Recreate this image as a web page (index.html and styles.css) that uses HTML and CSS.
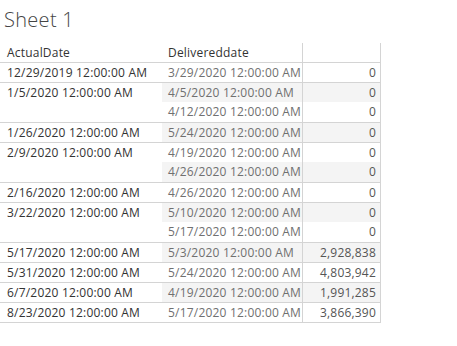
FILE: index.html
```html
<!DOCTYPE html>
<html>
<head>
<meta charset="utf-8">
<link rel="stylesheet" href="styles.css">
</head>
<body>
<div class="title">Sheet 1</div>
<div class="table">
  <div class="head">
    <div class="c1">ActualDate</div>
    <div class="c2">Delivereddate</div>
    <div class="c3"></div>
  </div>
  <div class="group">
    <div class="c1">12/29/2019 12:00:00 AM</div>
    <div class="rows">
      <div class="row"><div class="c2">3/29/2020 12:00:00 AM</div><div class="c3">0</div></div>
    </div>
  </div>
  <div class="group">
    <div class="c1">1/5/2020 12:00:00 AM</div>
    <div class="rows">
      <div class="row alt"><div class="c2">4/5/2020 12:00:00 AM</div><div class="c3">0</div></div>
      <div class="row"><div class="c2">4/12/2020 12:00:00 AM</div><div class="c3">0</div></div>
    </div>
  </div>
  <div class="group">
    <div class="c1">1/26/2020 12:00:00 AM</div>
    <div class="rows">
      <div class="row alt"><div class="c2">5/24/2020 12:00:00 AM</div><div class="c3">0</div></div>
    </div>
  </div>
  <div class="group">
    <div class="c1">2/9/2020 12:00:00 AM</div>
    <div class="rows">
      <div class="row"><div class="c2">4/19/2020 12:00:00 AM</div><div class="c3">0</div></div>
      <div class="row alt"><div class="c2">4/26/2020 12:00:00 AM</div><div class="c3">0</div></div>
    </div>
  </div>
  <div class="group">
    <div class="c1">2/16/2020 12:00:00 AM</div>
    <div class="rows">
      <div class="row"><div class="c2">4/26/2020 12:00:00 AM</div><div class="c3">0</div></div>
    </div>
  </div>
  <div class="group">
    <div class="c1">3/22/2020 12:00:00 AM</div>
    <div class="rows">
      <div class="row alt"><div class="c2">5/10/2020 12:00:00 AM</div><div class="c3">0</div></div>
      <div class="row"><div class="c2">5/17/2020 12:00:00 AM</div><div class="c3">0</div></div>
    </div>
  </div>
  <div class="group">
    <div class="c1">5/17/2020 12:00:00 AM</div>
    <div class="rows">
      <div class="row alt"><div class="c2">5/3/2020 12:00:00 AM</div><div class="c3">2,928,838</div></div>
    </div>
  </div>
  <div class="group">
    <div class="c1">5/31/2020 12:00:00 AM</div>
    <div class="rows">
      <div class="row"><div class="c2">5/24/2020 12:00:00 AM</div><div class="c3">4,803,942</div></div>
    </div>
  </div>
  <div class="group">
    <div class="c1">6/7/2020 12:00:00 AM</div>
    <div class="rows">
      <div class="row alt"><div class="c2">4/19/2020 12:00:00 AM</div><div class="c3">1,991,285</div></div>
    </div>
  </div>
  <div class="group last">
    <div class="c1">8/23/2020 12:00:00 AM</div>
    <div class="rows">
      <div class="row"><div class="c2">5/17/2020 12:00:00 AM</div><div class="c3">3,866,390</div></div>
    </div>
  </div>
</div>
</body>
</html>
```

FILE: styles.css
```css
html, body {
  margin: 0;
  padding: 0;
  background: #ffffff;
}
body {
  font-family: "Open Sans", "Liberation Sans", sans-serif;
  font-size: 12px;
  color: #333333;
}
.title {
  font-size: 20px;
  font-weight: 300;
  line-height: 27px;
  color: #444444;
  padding: 6px 0 0 4px;
  height: 27px;
  margin-bottom: 10px;
  letter-spacing: 0.3px;
}
.table {
  width: 381px;
  display: flex;
  flex-direction: column;
  line-height: 19px;
  letter-spacing: 0.2px;
}
.head {
  display: flex;
  height: 19px;
}
.head .c1, .head .c2 {
  color: #333333;
}
.group {
  display: flex;
  border-top: 1px solid #d4d4d4;
}
.group.last {
  border-bottom: 1px solid #d4d4d4;
}
.rows {
  display: flex;
  flex-direction: column;
}
.row {
  display: flex;
}
.row + .row .c2, .row + .row .c3 {
  height: 20px;
  line-height: 20px;
}
.row.alt {
  background: #f4f4f4;
}
.c1 {
  width: 162px;
  box-sizing: border-box;
  padding-left: 7px;
  white-space: nowrap;
  color: #333333;
}
.c2 {
  width: 141px;
  box-sizing: border-box;
  padding-left: 6px;
  border-right: 1px solid #d4d4d4;
  white-space: nowrap;
  color: #707070;
  height: 19px;
}
.c3 {
  width: 78px;
  box-sizing: border-box;
  padding-right: 4px;
  border-right: 1px solid #d4d4d4;
  text-align: right;
  color: #555555;
  height: 19px;
}
```
